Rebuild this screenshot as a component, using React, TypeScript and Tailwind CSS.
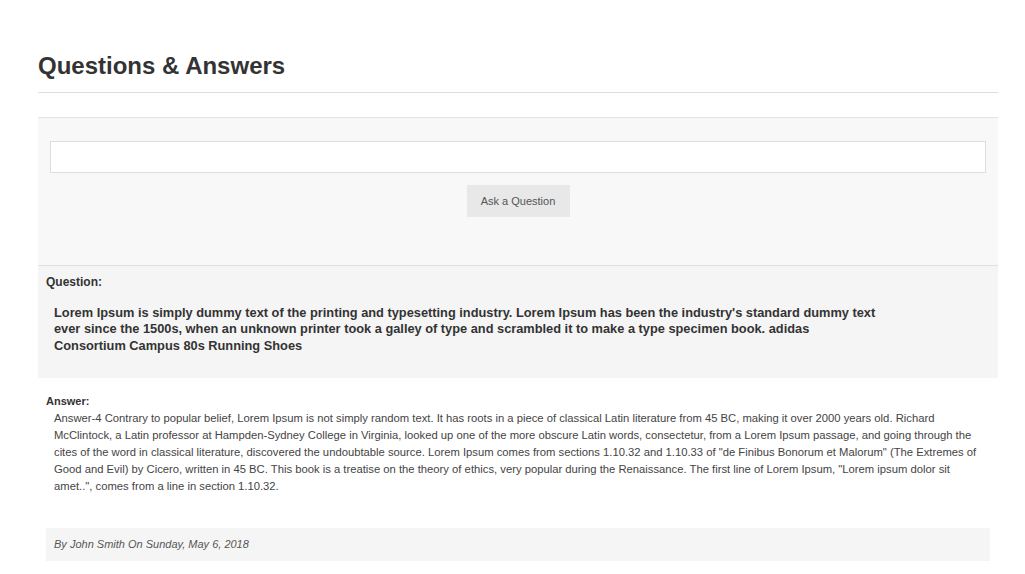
import React from "react";

export default function App() {
  return (
    <div className="min-h-[574px] bg-white" style={{ fontFamily: '"Liberation Sans", Arial, sans-serif' }}>
      <div className="ml-[38px] w-[960px] pt-[51px]">
        <h1 className="text-[24px] font-bold leading-[30px] text-[#333333]">Questions &amp; Answers</h1>
        <div className="mt-[11px] h-px bg-[#dddddd]" />
        <div className="mt-[24px] border-t border-[#e3e3e3] bg-[#f8f8f8] px-[12px] pt-[23px] pb-[48px]">
          <input className="block h-[32px] w-full border border-[#dddddd] bg-white px-2 text-[13px] outline-none" />
          <div className="mt-[12px] flex justify-center">
            <button className="h-[32px] w-[103px] bg-[#e8e8e8] text-[11px] text-[#555555]">Ask a Question</button>
          </div>
        </div>
        <div className="border-t border-[#dedede] bg-[#f5f5f5] px-[8px] pt-[8px] pb-[24px]">
          <div className="text-[12px] font-bold leading-[16px] text-[#333333]">Question:</div>
          <p className="mt-[15px] w-[834px] pl-[8px] text-[12.8px] font-bold leading-[16.4px] text-[#333333]">
            Lorem Ipsum is simply dummy text of the printing and typesetting industry. Lorem Ipsum has been the industry's standard dummy text ever since the 1500s, when an unknown printer took a galley of type and scrambled it to make a type specimen book. adidas Consortium Campus 80s Running Shoes
          </p>
        </div>
        <div className="px-[8px] pt-[16px]">
          <div className="text-[11px] font-bold leading-[14px] text-[#333333]">Answer:</div>
          <p className="mt-[2px] pr-[8px] pl-[8px] text-[11.25px] leading-[17px] text-[#444444]">
            Answer-4 Contrary to popular belief, Lorem Ipsum is not simply random text. It has roots in a piece of classical Latin literature from 45 BC, making it over 2000 years old. Richard McClintock, a Latin professor at Hampden-Sydney College in Virginia, looked up one of the more obscure Latin words, consectetur, from a Lorem Ipsum passage, and going through the cites of the word in classical literature, discovered the undoubtable source. Lorem Ipsum comes from sections 1.10.32 and 1.10.33 of "de Finibus Bonorum et Malorum" (The Extremes of Good and Evil) by Cicero, written in 45 BC. This book is a treatise on the theory of ethics, very popular during the Renaissance. The first line of Lorem Ipsum, "Lorem ipsum dolor sit amet..", comes from a line in section 1.10.32.
          </p>
          <div className="mt-[33px] flex h-[33px] items-center bg-[#f5f5f5] px-[8px] text-[11px] italic text-[#555555]">
            By John Smith On Sunday, May 6, 2018
          </div>
        </div>
      </div>
    </div>
  );
}
